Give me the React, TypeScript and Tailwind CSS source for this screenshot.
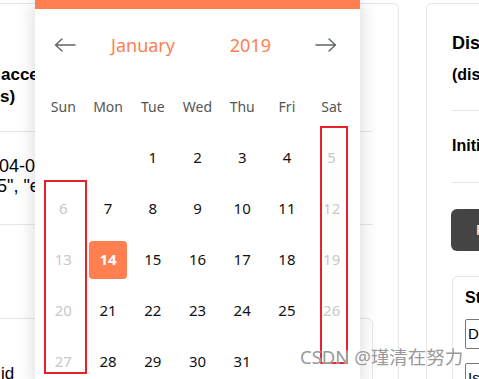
import React from 'react';

const weekdays = ['Sun', 'Mon', 'Tue', 'Wed', 'Thu', 'Fri', 'Sat'];

const Arrow = ({ flip }: { flip?: boolean }) => (
    <svg width="22" height="14" viewBox="0 0 22 14" fill="none" className={flip ? 'rotate-180' : ''}>
        <path d="M1.5 7H21M8 1L1.5 7L8 13" stroke="#5f6368" strokeWidth="1.4" strokeLinecap="round" strokeLinejoin="round" />
    </svg>
);

const Calendar = () => {
    // January 2019 starts on a Tuesday
    const cells: (number | null)[] = [null, null];
    for (let d = 1; d <= 31; d++) cells.push(d);

    return (
        <div className="absolute left-[35px] top-0 w-[325px] bg-white shadow-[0_0_18px_rgba(0,0,0,0.16)] font-['Noto_Sans',sans-serif]">
            <div className="h-[9px] bg-[#ff7f50]" />
            <div className="flex items-center h-[72px] pl-[19px] pr-[23px]">
                <Arrow />
                <div className="flex-1 flex justify-between pl-[35px] pr-[44px] text-[18px] text-[#ff7f50]">
                    <span>January</span>
                    <span>2019</span>
                </div>
                <Arrow flip />
            </div>
            <div className="grid grid-cols-7 px-[6px]">
                {weekdays.map((w) => (
                    <div key={w} className="h-[51px] flex items-center justify-center text-[14px] text-[#555]">
                        {w}
                    </div>
                ))}
                {cells.map((d, i) => {
                    const weekend = i % 7 === 0 || i % 7 === 6;
                    return (
                        <div key={i} className="h-[51px] flex items-center justify-center">
                            {d === 14 ? (
                                <span className="w-[38px] h-[38px] rounded-[4px] bg-[#ff7f50] text-white font-bold text-[15px] flex items-center justify-center">
                                    {d}
                                </span>
                            ) : (
                                <span className={`text-[15px] ${weekend ? 'text-[#c8c8c8]' : 'text-[#111]'}`}>{d}</span>
                            )}
                        </div>
                    );
                })}
            </div>
        </div>
    );
};

const App = () => {
    return (
        <div className="relative w-[479px] h-[379px] overflow-hidden bg-white font-['Liberation_Sans',Arial,sans-serif]">
            <div className="flex pt-[3px] gap-[27px]">
                {/* left panel behind the picker */}
                <div className="-ml-[20px] w-[419px] h-[420px] shrink-0 border border-[#e6e6e6] rounded-[6px] pl-[21px] pr-[25px]">
                    <div className="pt-[60px] pb-[23px] -ml-[2px] border-b border-[#e6e6e6] text-[17px] leading-[22px] font-bold text-black whitespace-nowrap">
                        <div className="pl-[1px]">access period</div>
                        <div>s)</div>
                    </div>
                    <div className="pt-[24px] pb-[28px] -ml-[2px] border-b border-[#e6e6e6] text-[18px] leading-[20px] text-black whitespace-nowrap">
                        <div className="-ml-[1px]">04-05", "end"</div>
                        <div className="-ml-[3px]">5", "end": "2019</div>
                    </div>
                    <div className="h-[93px]" />
                    <div className="-ml-[30px] border border-[#e6e6e6] rounded-[6px] h-[80px] pt-[45px] pl-[28px] text-[17px] leading-[20px] text-black">
                        id
                    </div>
                </div>

                {/* right panel */}
                <div className="w-[200px] h-[420px] shrink-0 border border-[#e6e6e6] rounded-[6px] pl-[25px]">
                    <div className="pt-[27px] text-[18px] leading-[24px] font-bold text-black whitespace-nowrap">Disabled</div>
                    <div className="pt-[10px] pb-[25px] border-b border-[#e6e6e6] text-[16px] leading-[20px] font-bold text-black whitespace-nowrap">
                        (disabledDate)
                    </div>
                    <div className="pt-[25px] pb-[26px] border-b border-[#e6e6e6] text-[16px] leading-[20px] font-bold text-black whitespace-nowrap">
                        Initial value
                    </div>
                    <div className="mt-[26px] -ml-[1px] h-[42px] w-[180px] rounded-[6px] bg-[#444] text-white text-[15px] flex items-center pl-[25px]">
                        Reset
                    </div>
                    <div className="mt-[25px] border border-[#e6e6e6] rounded-[6px] pl-[12px] pt-[11px] h-[140px]">
                        <div className="text-[16px] leading-[20px] font-bold text-black">Start</div>
                        <div className="mt-[11px] h-[30px] w-[150px] border border-[#777] rounded-[2px] text-[15px] text-black pl-[2px] flex items-center">
                            Date
                        </div>
                        <div className="mt-[14px] h-[30px] w-[150px] border border-[#777] rounded-[2px] text-[15px] text-black pl-[2px] flex items-center">
                            Is
                        </div>
                    </div>
                </div>
            </div>

            <Calendar />

            {/* red annotation boxes */}
            <div className="absolute left-[44px] top-[180px] w-[43px] h-[194px] border-2 border-[#e8202a]" />
            <div className="absolute left-[320px] top-[126px] w-[28px] h-[238px] border-2 border-[#e8202a]" />

            {/* watermark */}
            <div className="absolute left-[300px] top-[345px] text-[18.5px] leading-[24px] text-[#999] whitespace-nowrap font-['Noto_Sans','Noto_Sans_CJK_SC',sans-serif] [text-shadow:0_0_2px_#fff]">
                CSDN @瑾清在努力
            </div>
        </div>
    );
};

export default App;
